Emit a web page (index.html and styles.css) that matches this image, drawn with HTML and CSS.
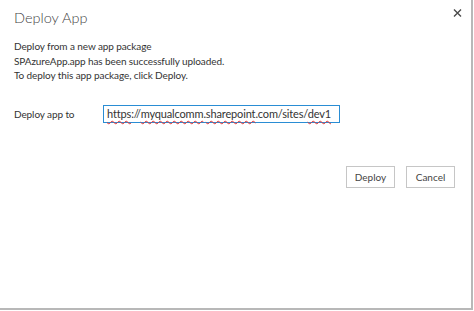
FILE: index.html
```html
<!DOCTYPE html>
<html>
<head>
<meta charset="utf-8">
<link rel="stylesheet" href="styles.css">
</head>
<body>
<div class="dialog">
  <div class="header">
    <div class="title">Deploy App</div>
    <button class="close" aria-label="Close">
      <svg width="9" height="8" viewBox="0 0 9 8"><path d="M1 0.5 L8 7.5 M8 0.5 L1 7.5" stroke="#4a4a4a" stroke-width="1.4" fill="none"/></svg>
    </button>
  </div>
  <div class="body">
    <div class="section-title">Deploy from a new app package</div>
    <div class="msg">SPAzureApp.app has been successfully uploaded.</div>
    <div class="msg">To deploy this app package, click Deploy.</div>
    <div class="field">
      <label class="label">Deploy app to</label>
      <div class="input"><span class="sp">https</span>://<span class="sp">myqualcomm</span>.<span class="sp">sharepoint</span>.com/sites/<span class="sp">dev1</span></div>
    </div>
    <div class="actions">
      <button class="btn">Deploy</button>
      <button class="btn">Cancel</button>
    </div>
  </div>
</div>
</body>
</html>
```
FILE: styles.css
```css
html, body { margin: 0; padding: 0; background: #fff; }
body { font-family: Lato, "Open Sans", sans-serif; color: #333; }
.dialog {
  width: 471px;
  height: 308px;
  border-right: 2px solid #b8b8b8;
  border-bottom: 2px solid #b8b8b8;
  background: #fff;
}
.header { display: flex; justify-content: space-between; align-items: flex-start; padding: 7px 8px 0 14px; }
.title { font-size: 14.5px; font-weight: 300; color: #444; line-height: 22px; }
.close { border: 0; background: none; padding: 0; width: 12px; height: 12px; display: flex; align-items: center; justify-content: center; }
.body { padding: 10px 14px 0 14px; font-size: 10px; letter-spacing: -0.1px; color: #333; }
.section-title { line-height: 14px; margin-bottom: 1px; }
.msg { line-height: 14px; }
.field { display: flex; align-items: center; margin-top: 23px; }
.label { width: 89px; }
.input {
  width: 229px; height: 16px; border: 1px solid #2a8dd4; padding: 0 3px; line-height: 16px; color: #333; font-size: 11px; letter-spacing: -0.15px;
}
.sp { text-decoration: underline wavy #e03030; text-decoration-thickness: 1px; text-underline-offset: 2px; }
.actions { display: flex; justify-content: flex-end; gap: 11px; margin-top: 43px; padding-right: 2px; }
.btn {
  font-family: inherit; font-size: 10px; color: #444; background: #fff; border: 1px solid #c6c6c6; width: 49px; height: 22px; padding: 0;
}
```
